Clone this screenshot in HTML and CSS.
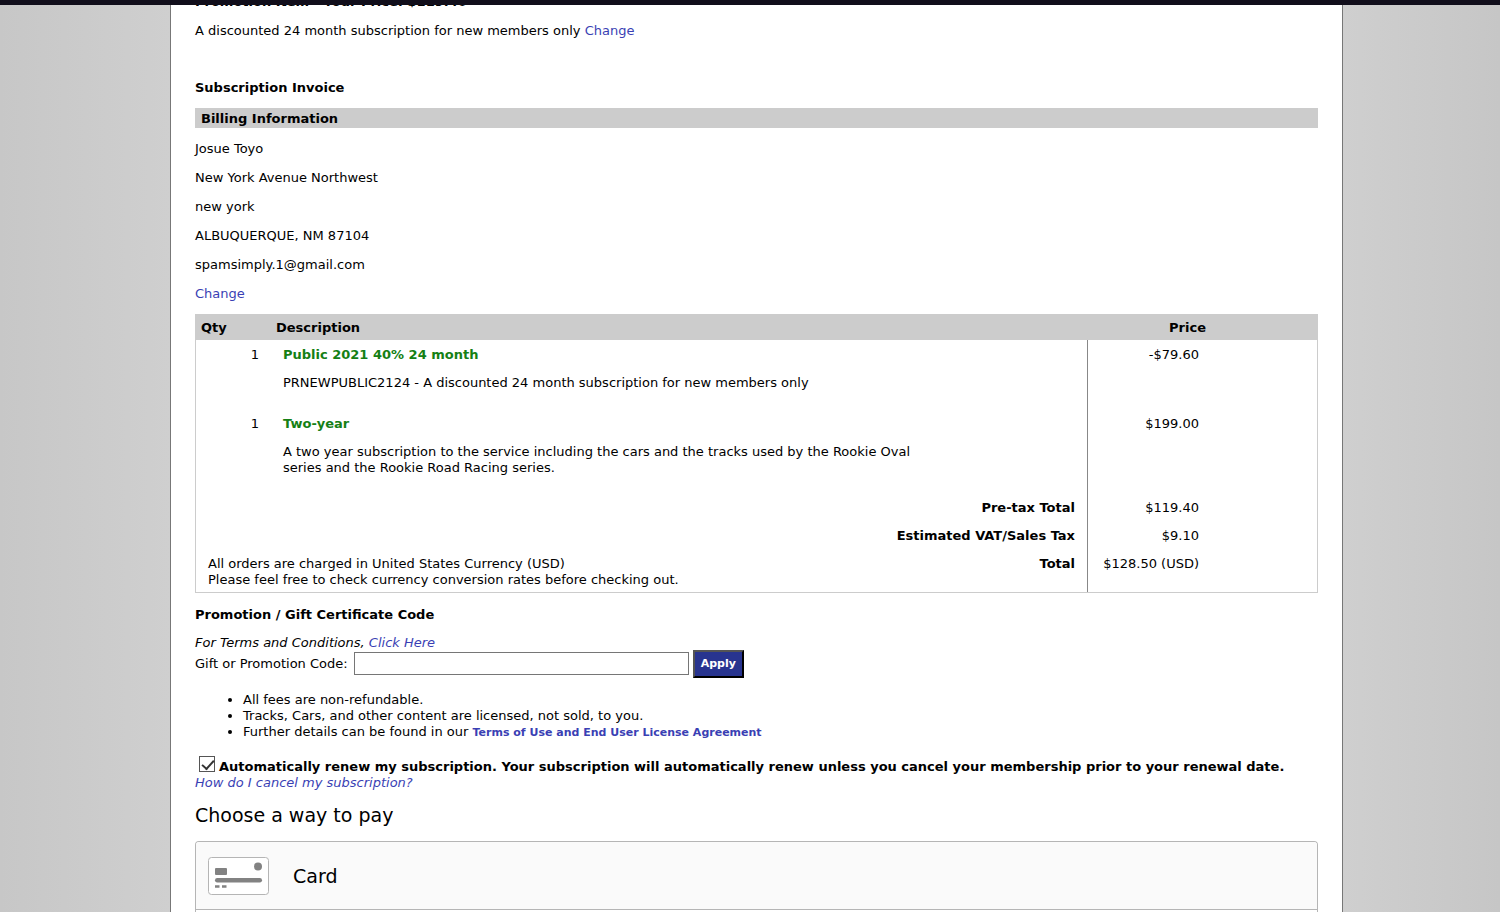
FILE: index.html
```html
<!DOCTYPE html>
<html lang="en">
<head>
<meta charset="utf-8">
<title>Subscription Invoice</title>
<link rel="stylesheet" href="styles.css">
</head>
<body>
<div class="topbar"></div>
<main class="page">
  <h2 class="title offer-title">Promotion Item - Your Price: $119.40</h2>
  <p class="offer">A discounted 24 month subscription for new members only <a href="#">Change</a></p>

  <h2 class="title">Subscription Invoice</h2>
  <h3 class="bar">Billing Information</h3>
  <address class="billing">
    <span>Josue Toyo</span>
    <span>New York Avenue Northwest</span>
    <span>new york</span>
    <span>ALBUQUERQUE, NM 87104</span>
    <span>spamsimply.1@gmail.com</span>
    <a href="#">Change</a>
  </address>

  <table class="invoice">
    <thead>
      <tr><th class="qty">Qty</th><th class="desc">Description</th><th class="price">Price</th></tr>
    </thead>
    <tbody>
      <tr class="item">
        <td class="qty">1</td>
        <td class="desc"><h4>Public 2021 40% 24 month</h4><p>PRNEWPUBLIC2124 - A discounted 24 month subscription for new members only</p></td>
        <td class="price">-$79.60</td>
      </tr>
      <tr class="item">
        <td class="qty">1</td>
        <td class="desc"><h4>Two-year</h4><p>A two year subscription to the service including the cars and the tracks used by the Rookie Oval series and the Rookie Road Racing series.</p></td>
        <td class="price">$199.00</td>
      </tr>
      <tr><td colspan="2" class="total">Pre-tax Total</td><td class="price">$119.40</td></tr>
      <tr><td colspan="2" class="total">Estimated VAT/Sales Tax</td><td class="price">$9.10</td></tr>
      <tr class="final">
        <td colspan="2"><div class="last"><p>All orders are charged in United States Currency (USD)<br>Please feel free to check currency conversion rates before checking out.</p><strong>Total</strong></div></td>
        <td class="price">$128.50 (USD)</td>
      </tr>
    </tbody>
  </table>

  <h2 class="title promo-title">Promotion / Gift Certificate Code</h2>
  <p class="terms">For Terms and Conditions, <a href="#">Click Here</a></p>
  <form class="promo">
    <label for="code">Gift or Promotion Code:</label>
    <input class="code" id="code" type="text">
    <button class="apply" type="button">Apply</button>
  </form>
  <ul class="notes">
    <li>All fees are non-refundable.</li>
    <li>Tracks, Cars, and other content are licensed, not sold, to you.</li>
    <li>Further details can be found in our <a href="#">Terms of Use and End User License Agreement</a></li>
  </ul>
  <div class="renew">
    <input class="check" id="renew" type="checkbox" checked>
    <label for="renew">Automatically renew my subscription. Your subscription will automatically renew unless you cancel your membership prior to your renewal date.</label>
  </div>
  <a class="cancel" href="#">How do I cancel my subscription?</a>

  <h2 class="pay-title">Choose a way to pay</h2>
  <div class="methods">
    <button class="method" type="button">
      <svg class="card" viewBox="0 0 61 38" width="61" height="38" aria-hidden="true">
        <rect x="0.5" y="0.5" width="60" height="37" rx="3" fill="#fff" stroke="#b5b5b5"/>
        <rect x="7" y="11" width="12" height="7" rx="1" fill="#828282"/>
        <circle cx="50" cy="9.500" r="4" fill="#828282"/>
        <rect x="7" y="21" width="47" height="4.500" rx="2.200" fill="#828282"/>
        <path d="M7 29.500h4.500M14 29.500h4.500" stroke="#828282" stroke-width="2.500"/>
      </svg>
      <span>Card</span>
    </button>
  </div>
</main>
</body>
</html>
```
FILE: styles.css
```css
* { box-sizing: border-box; }
html { height: 100%; }
body {
  min-height: 100%;
  margin: 0;
  padding: 0 157px 0 170px;
  display: grid;
  background: linear-gradient(to right, #c7c7c7, #cfcfcf 170px, #cfcfcf calc(100% - 157px), #c6c6c6);
  color: #000;
  font: 13px/16px Verdana, "DejaVu Sans", sans-serif;
}
h2, h3, h4, p { margin: 0; font-size: 13px; line-height: 16px; }
a { color: #3a3fb4; text-decoration: none; }

.topbar {
  position: fixed;
  top: 0;
  left: 0;
  right: 0;
  height: 5px;
  background: #110e1b;
}
.page {
  padding: 0 24px;
  background: #fff;
  border: solid #777;
  border-width: 0 1px;
  display: flow-root;
}
.offer-title { margin: -6px 0 13px; }
.offer { margin-bottom: 41px; }
.bar { margin-top: 12px; padding: 3px 6px 1px; background: #ccc; }
.billing { display: grid; margin: 6px 0; font-style: normal; line-height: 29px; }
.billing a { justify-self: start; }

.invoice {
  width: 100%;
  border: 1px solid #ccc;
  border-spacing: 0;
  table-layout: fixed;
}
.invoice th { padding: 5px 6px 4px 5px; background: #ccc; text-align: left; }
.invoice td { padding: 6px 12px; vertical-align: top; }
.invoice th.qty { width: 75px; }
.invoice td.qty { text-align: right; }
.invoice .item td { padding-top: 7px; }
.invoice .item .desc { padding-bottom: 18px; }
.invoice .final td { padding-bottom: 4px; }
.invoice .price { width: 230px; text-align: right; }
.invoice th.price { padding-right: 111px; }
.invoice td.price { padding-right: 118px; padding-left: 0; border-left: 1px solid #888; }
.item h4 { margin-bottom: 12px; color: #158015; }
.item p { max-width: 640px; }
.total { text-align: right; font-weight: bold; }
.last { display: flex; justify-content: space-between; }

.promo-title { margin: 14px 0 12px; }
.terms { font-style: italic; }
.promo { display: flex; align-items: center; gap: 4px; margin-top: -1px; }
.code { width: 335px; height: 23px; margin: 0 0 2px 2px; border: 1px solid #767676; background: #fff; font: inherit; }
.apply {
  height: 28px;
  padding: 0 6px;
  border: 2px outset #000;
  background: #28348f;
  color: #fff;
  font: bold 11px/16px Verdana, "DejaVu Sans", sans-serif;
}
.notes { margin: 14px 0 15px; padding-left: 48px; }
.notes a { font-size: 11px; font-weight: bold; }
.renew { display: flex; align-items: flex-start; gap: 4px; font-weight: bold; }
.renew label { padding-top: 3px; }
.check {
  appearance: none;
  flex: none;
  width: 16px;
  height: 16px;
  margin: 0 0 0 4px;
  border: 1px solid #555;
  background: #fff;
}
.check:checked::before {
  content: "";
  display: block;
  width: 10px;
  height: 5px;
  margin: 3px 0 0 2px;
  border: solid #333;
  border-width: 0 0 2px 2px;
  transform: rotate(-48deg);
}
.cancel { display: block; font-style: italic; }
.pay-title { margin: 12px 0 14px; font-size: 19px; line-height: 24px; font-weight: normal; }
.methods {
  padding-bottom: 2px;
  border: 1px solid #b5b5b5;
  border-bottom: 0;
  border-radius: 4px 4px 0 0;
}
.method {
  display: flex;
  align-items: center;
  gap: 24px;
  width: 100%;
  height: 68px;
  padding: 0 12px;
  border: 0;
  border-bottom: 1px solid #b5b5b5;
  border-radius: 3px 3px 0 0;
  background: #fafafa;
  color: #000;
  font: 19px/24px Verdana, "DejaVu Sans", sans-serif;
}
```
